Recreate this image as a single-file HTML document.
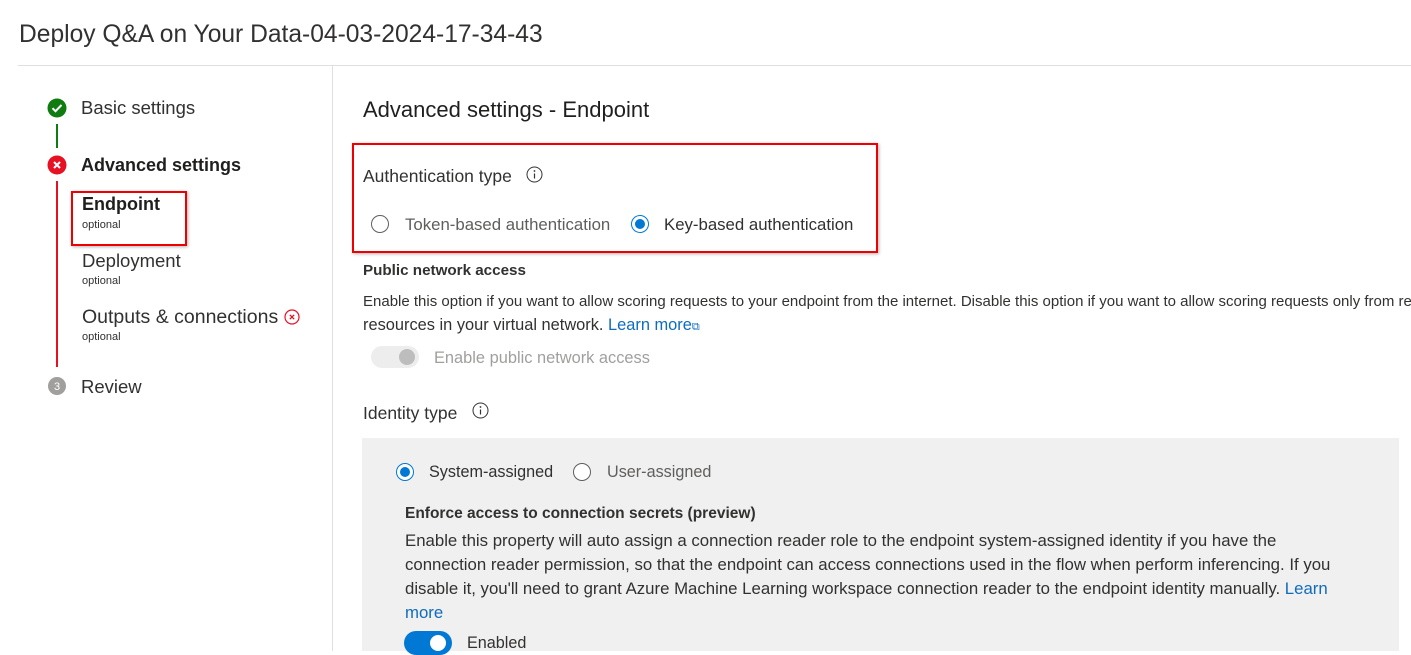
<!DOCTYPE html>
<html><head><style>
*{margin:0;padding:0;box-sizing:border-box}
body{width:1411px;height:651px;overflow:hidden;background:#fff;font-family:"Liberation Sans",sans-serif;color:#323130;position:relative}
.a{position:absolute;white-space:nowrap}
.t{font-size:15px}
.link{color:#0f6cbd}
.radio{position:absolute;width:18px;height:18px;border-radius:50%;border:1px solid #605e5c;background:#fff}
.radio.on{border-color:#0078d4}
.radio.on::after{content:"";position:absolute;left:3px;top:3px;width:10px;height:10px;border-radius:50%;background:#0078d4}
</style></head><body>
<div class="a" style="left:19px;top:21px;font-size:24.6px;color:#323130">Deploy Q&amp;A on Your Data-04-03-2024-17-34-43</div>
<div class="a" style="left:18px;top:65px;width:1393px;height:1px;background:#e1dfdd"></div>
<div class="a" style="left:332px;top:66px;width:1px;height:585px;background:#e1dfdd"></div>

<svg class="a" style="left:47px;top:98px" width="20" height="20"><circle cx="10" cy="10" r="9.5" fill="#107c10"/><path d="M5.5 10.2l3 3 6-6.2" stroke="#fff" stroke-width="2" fill="none"/></svg>
<div class="a" style="left:81px;top:97px;font-size:18.5px">Basic settings</div>
<div class="a" style="left:56px;top:124px;width:2px;height:24px;background:#107c10"></div>
<svg class="a" style="left:47px;top:155px" width="20" height="20"><circle cx="10" cy="10" r="9.5" fill="#e81123"/><path d="M7 7l6 6M13 7l-6 6" stroke="#fff" stroke-width="2"/></svg>
<div class="a" style="left:81px;top:155px;font-size:18px;font-weight:bold;color:#201f1e">Advanced settings</div>
<div class="a" style="left:56px;top:181px;width:2px;height:186px;background:#e81123"></div>
<div class="a" style="left:71px;top:191px;width:116px;height:55px;border:2px solid #e00;box-shadow:1px 1px 3px rgba(0,0,0,.3)"></div>
<div class="a" style="left:82px;top:194px;font-size:18px;font-weight:bold;color:#201f1e">Endpoint</div>
<div class="a" style="left:82px;top:219px;font-size:11px;color:#323130">optional</div>
<div class="a" style="left:82px;top:250px;font-size:18.5px">Deployment</div>
<div class="a" style="left:82px;top:275px;font-size:11px">optional</div>
<div class="a" style="left:82px;top:306px;font-size:19.5px">Outputs &amp; connections</div>
<svg class="a" style="left:284px;top:309px" width="16" height="16"><circle cx="8" cy="8" r="7" fill="none" stroke="#e81123" stroke-width="1.2"/><path d="M5.8 5.8l4.4 4.4M10.2 5.8l-4.4 4.4" stroke="#e81123" stroke-width="1.3"/></svg>
<div class="a" style="left:82px;top:331px;font-size:11px">optional</div>
<svg class="a" style="left:47px;top:376px" width="20" height="20"><circle cx="10" cy="10" r="9" fill="#a19f9d"/><text x="10" y="14" font-size="11" fill="#fff" text-anchor="middle" font-family="Liberation Sans">3</text></svg>
<div class="a" style="left:81px;top:376px;font-size:18.5px">Review</div>

<div class="a" style="left:363px;top:97px;font-size:22px;color:#201f1e">Advanced settings - Endpoint</div>
<div class="a" style="left:352px;top:143px;width:526px;height:110px;border:2px solid #e00;box-shadow:1px 1px 3px rgba(0,0,0,.3)"></div>
<div class="a" style="left:363px;top:166px;font-size:17.5px">Authentication type</div>
<svg class="a" style="left:526px;top:166px" width="17" height="17"><circle cx="8.5" cy="8.5" r="7.5" fill="none" stroke="#323130"/><path d="M8.5 7.5v5" stroke="#323130" stroke-width="1.2"/><circle cx="8.5" cy="5" r=".9" fill="#323130"/></svg>
<div class="radio" style="left:371px;top:215px"></div>
<div class="a" style="left:405px;top:215px;font-size:16.8px;color:#605e5c">Token-based authentication</div>
<div class="radio on" style="left:631px;top:215px"></div>
<div class="a" style="left:664px;top:215px;font-size:16.8px">Key-based authentication</div>
<div class="a" style="left:363px;top:262px;font-size:15.2px;font-weight:600">Public network access</div>
<div class="a t" style="left:363px;top:293px">Enable this option if you want to allow scoring requests to your endpoint from the internet. Disable this option if you want to allow scoring requests only from resources</div>
<div class="a" style="left:363px;top:316px;font-size:16.4px">resources in your virtual network. <span class="link">Learn more</span><span class="link" style="font-size:11px">&#x29C9;</span></div>
<div class="a" style="left:371px;top:346px;width:48px;height:22px;border-radius:11px;background:#ededed"></div>
<div class="a" style="left:399px;top:349px;width:16px;height:16px;border-radius:50%;background:#bdbdbd"></div>
<div class="a" style="left:434px;top:349px;font-size:16.4px;color:#a19f9d">Enable public network access</div>
<div class="a" style="left:363px;top:403px;font-size:17.5px">Identity type</div>
<svg class="a" style="left:472px;top:402px" width="17" height="17"><circle cx="8.5" cy="8.5" r="7.5" fill="none" stroke="#323130"/><path d="M8.5 7.5v5" stroke="#323130" stroke-width="1.2"/><circle cx="8.5" cy="5" r=".9" fill="#323130"/></svg>

<div class="a" style="left:362px;top:438px;width:1037px;height:213px;background:#f0f0f0"></div>
<div class="radio on" style="left:396px;top:463px"></div>
<div class="a" style="left:429px;top:463px;font-size:16.2px">System-assigned</div>
<div class="radio" style="left:573px;top:463px"></div>
<div class="a" style="left:607px;top:463px;font-size:16.2px;color:#605e5c">User-assigned</div>
<div class="a" style="left:405px;top:505px;font-size:15.5px;font-weight:600">Enforce access to connection secrets (preview)</div>
<div class="a" style="left:405px;top:529px;font-size:16.8px;line-height:24px">Enable this property will auto assign a connection reader role to the endpoint system-assigned identity if you have the<br>connection reader permission, so that the endpoint can access connections used in the flow when perform inferencing. If you<br>disable it, you'll need to grant Azure Machine Learning workspace connection reader to the endpoint identity manually. <span class="link">Learn</span><br><span class="link">more</span></div>
<div class="a" style="left:404px;top:631px;width:48px;height:24px;border-radius:12px;background:#0078d4"></div>
<div class="a" style="left:430px;top:635px;width:16px;height:16px;border-radius:50%;background:#fff"></div>
<div class="a" style="left:467px;top:634px;font-size:16.2px">Enabled</div>
</body></html>
